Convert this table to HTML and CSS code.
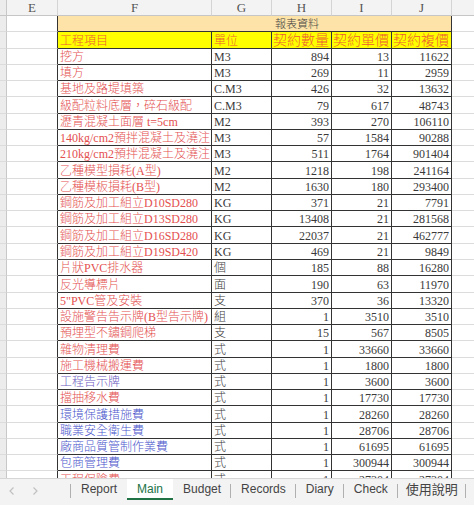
FILE: index.html
```html
<!DOCTYPE html>
<html>
<head>
<meta charset="utf-8">
<link rel="stylesheet" href="styles.css">
</head>
<body>
<div class="app">
  <div class="gridwrap">
    <table class="grid">
      <colgroup>
        <col class="c-rh"><col class="c-e"><col class="c-f"><col class="c-g"><col class="c-h"><col class="c-i"><col class="c-j"><col class="c-k">
      </colgroup>
      <thead>
        <tr class="colhdr">
          <th class="rh"></th><th>E</th><th>F</th><th>G</th><th>H</th><th>I</th><th>J</th><th class="kh"></th>
        </tr>
      </thead>
      <tbody>
        <tr>
          <td class="rh"></td><td class="e"></td>
          <td class="title" colspan="5"><span class="title-text">報表資料</span></td>
          <td class="k"></td>
        </tr>
        <tr class="head">
          <td class="rh"></td><td class="e"></td>
          <td class="d name hd">工程項目</td><td class="d unit hd">單位</td><td class="d hd big">契約數量</td><td class="d hd big">契約單價</td><td class="d hd big">契約複價</td>
          <td class="k"></td>
        </tr>
        <tr><td class="rh"></td><td class="e"></td><td class="d name red">挖方</td><td class="d unit">M3</td><td class="d num">894</td><td class="d num">13</td><td class="d num">11622</td><td class="k"></td></tr>
        <tr><td class="rh"></td><td class="e"></td><td class="d name red">填方</td><td class="d unit">M3</td><td class="d num">269</td><td class="d num">11</td><td class="d num">2959</td><td class="k"></td></tr>
        <tr><td class="rh"></td><td class="e"></td><td class="d name red">基地及路堤填築</td><td class="d unit">C.M3</td><td class="d num">426</td><td class="d num">32</td><td class="d num">13632</td><td class="k"></td></tr>
        <tr><td class="rh"></td><td class="e"></td><td class="d name red">級配粒料底層，碎石級配</td><td class="d unit">C.M3</td><td class="d num">79</td><td class="d num">617</td><td class="d num">48743</td><td class="k"></td></tr>
        <tr><td class="rh"></td><td class="e"></td><td class="d name red">瀝青混凝土面層 t=5cm</td><td class="d unit">M2</td><td class="d num">393</td><td class="d num">270</td><td class="d num">106110</td><td class="k"></td></tr>
        <tr><td class="rh"></td><td class="e"></td><td class="d name red">140kg/cm2預拌混凝土及澆注</td><td class="d unit">M3</td><td class="d num">57</td><td class="d num">1584</td><td class="d num">90288</td><td class="k"></td></tr>
        <tr><td class="rh"></td><td class="e"></td><td class="d name red">210kg/cm2預拌混凝土及澆注</td><td class="d unit">M3</td><td class="d num">511</td><td class="d num">1764</td><td class="d num">901404</td><td class="k"></td></tr>
        <tr><td class="rh"></td><td class="e"></td><td class="d name red">乙種模型損耗(A型)</td><td class="d unit">M2</td><td class="d num">1218</td><td class="d num">198</td><td class="d num">241164</td><td class="k"></td></tr>
        <tr><td class="rh"></td><td class="e"></td><td class="d name red">乙種模板損耗(B型)</td><td class="d unit">M2</td><td class="d num">1630</td><td class="d num">180</td><td class="d num">293400</td><td class="k"></td></tr>
        <tr><td class="rh"></td><td class="e"></td><td class="d name red">鋼筋及加工組立D10SD280</td><td class="d unit">KG</td><td class="d num">371</td><td class="d num">21</td><td class="d num">7791</td><td class="k"></td></tr>
        <tr><td class="rh"></td><td class="e"></td><td class="d name red">鋼筋及加工組立D13SD280</td><td class="d unit">KG</td><td class="d num">13408</td><td class="d num">21</td><td class="d num">281568</td><td class="k"></td></tr>
        <tr><td class="rh"></td><td class="e"></td><td class="d name red">鋼筋及加工組立D16SD280</td><td class="d unit">KG</td><td class="d num">22037</td><td class="d num">21</td><td class="d num">462777</td><td class="k"></td></tr>
        <tr><td class="rh"></td><td class="e"></td><td class="d name red">鋼筋及加工組立D19SD420</td><td class="d unit">KG</td><td class="d num">469</td><td class="d num">21</td><td class="d num">9849</td><td class="k"></td></tr>
        <tr><td class="rh"></td><td class="e"></td><td class="d name red">片狀PVC排水器</td><td class="d unit">個</td><td class="d num">185</td><td class="d num">88</td><td class="d num">16280</td><td class="k"></td></tr>
        <tr><td class="rh"></td><td class="e"></td><td class="d name red">反光導標片</td><td class="d unit">面</td><td class="d num">190</td><td class="d num">63</td><td class="d num">11970</td><td class="k"></td></tr>
        <tr><td class="rh"></td><td class="e"></td><td class="d name red">5"PVC管及安裝</td><td class="d unit">支</td><td class="d num">370</td><td class="d num">36</td><td class="d num">13320</td><td class="k"></td></tr>
        <tr><td class="rh"></td><td class="e"></td><td class="d name red">設施警告告示牌(B型告示牌)</td><td class="d unit">組</td><td class="d num">1</td><td class="d num">3510</td><td class="d num">3510</td><td class="k"></td></tr>
        <tr><td class="rh"></td><td class="e"></td><td class="d name red">預埋型不鏽鋼爬梯</td><td class="d unit">支</td><td class="d num">15</td><td class="d num">567</td><td class="d num">8505</td><td class="k"></td></tr>
        <tr><td class="rh"></td><td class="e"></td><td class="d name red">雜物清理費</td><td class="d unit">式</td><td class="d num">1</td><td class="d num">33660</td><td class="d num">33660</td><td class="k"></td></tr>
        <tr><td class="rh"></td><td class="e"></td><td class="d name red">施工機械搬運費</td><td class="d unit">式</td><td class="d num">1</td><td class="d num">1800</td><td class="d num">1800</td><td class="k"></td></tr>
        <tr><td class="rh"></td><td class="e"></td><td class="d name purple">工程告示牌</td><td class="d unit">式</td><td class="d num">1</td><td class="d num">3600</td><td class="d num">3600</td><td class="k"></td></tr>
        <tr><td class="rh"></td><td class="e"></td><td class="d name red">擋抽移水費</td><td class="d unit">式</td><td class="d num">1</td><td class="d num">17730</td><td class="d num">17730</td><td class="k"></td></tr>
        <tr><td class="rh"></td><td class="e"></td><td class="d name blue">環境保護措施費</td><td class="d unit">式</td><td class="d num">1</td><td class="d num">28260</td><td class="d num">28260</td><td class="k"></td></tr>
        <tr><td class="rh"></td><td class="e"></td><td class="d name blue">職業安全衛生費</td><td class="d unit">式</td><td class="d num">1</td><td class="d num">28706</td><td class="d num">28706</td><td class="k"></td></tr>
        <tr><td class="rh"></td><td class="e"></td><td class="d name blue">廠商品質管制作業費</td><td class="d unit">式</td><td class="d num">1</td><td class="d num">61695</td><td class="d num">61695</td><td class="k"></td></tr>
        <tr><td class="rh"></td><td class="e"></td><td class="d name blue">包商管理費</td><td class="d unit">式</td><td class="d num">1</td><td class="d num">300944</td><td class="d num">300944</td><td class="k"></td></tr>
        <tr class="cut"><td class="rh"></td><td class="e"></td><td class="d name red">工程保險費</td><td class="d unit">式</td><td class="d num">1</td><td class="d num">27304</td><td class="d num">27304</td><td class="k"></td></tr>
      </tbody>
    </table>
  </div>
  <div class="tabbar">
    <div class="nav">
      <svg class="arrow" width="5" height="8" viewBox="0 0 5 8"><path d="M4.5 0.5 L1 4 L4.5 7.5" fill="none" stroke="#c0c0c0" stroke-width="1.2"/></svg>
      <svg class="arrow" width="5" height="8" viewBox="0 0 5 8"><path d="M0.5 0.5 L4 4 L0.5 7.5" fill="none" stroke="#c0c0c0" stroke-width="1.2"/></svg>
    </div>
    <div class="tabs">
      <div class="tab">Report</div>
      <div class="tab active">Main</div>
      <div class="tab">Budget</div>
      <div class="tab">Records</div>
      <div class="tab">Diary</div>
      <div class="tab">Check</div>
      <div class="tab cjk">使用說明</div>
    </div>
  </div>
</div>
</body>
</html>
```

FILE: styles.css
```css
html, body {
  margin: 0;
  padding: 0;
  background: #ffffff;
}
.app {
  width: 474px;
  height: 505px;
  display: flex;
  flex-direction: column;
  overflow: hidden;
}
.gridwrap {
  height: 478px;
  overflow: hidden;
  flex: none;
}
.grid {
  border-collapse: separate;
  border-spacing: 0;
  table-layout: fixed;
  width: 500px;
  font-family: "Liberation Serif", "Noto Sans CJK TC", serif;
  font-size: 12px;
  font-weight: 300;
  color: #3a3a3a;
}
.c-rh { width: 7px; }
.c-e { width: 51px; }
.c-f { width: 154px; }
.c-g { width: 60px; }
.c-h { width: 60px; }
.c-i { width: 60px; }
.c-j { width: 60px; }
.c-k { width: 48px; }

.grid td, .grid th {
  padding: 0 2px 0 2px;
  border-right: 1px solid #dcdcdc;
  border-bottom: 1px solid #dcdcdc;
  white-space: nowrap;
  overflow: hidden;
  vertical-align: bottom;
  line-height: 14px;
}
.grid tbody tr {
  height: 16.28px;
}
.colhdr {
  height: 16px;
}
.colhdr th {
  background: #f3f3f3;
  border-right: 1px solid #d4d4d4;
  border-bottom: 1px solid #c6c6c6;
  font-weight: normal;
  color: #555;
  font-size: 13px;
  vertical-align: middle;
  text-align: center;
  line-height: 15px;
}
.grid .rh {
  background: #ececec;
  border-right: 1px solid #c8c8c8;
  padding: 0;
}
.grid td.e {
  border-right: 1px solid #333;
}
.grid td.title {
  background: #fde3a7;
  border-right: 1px solid #333;
  border-bottom: 1px solid #333;
  color: #444;
  padding-left: 0;
  font-size: 11px;
}
.title-text {
  padding-left: 217px;
}
.grid td.d {
  border-right: 1px solid #333;
  border-bottom: 1px solid #333;
}
.grid td.hd {
  background: #ffff00;
  color: #ec5a34;
}
.grid td.big {
  font-size: 14px;
  padding-left: 1px;
}
.num {
  text-align: right;
}
.red { color: #e45050; }
.blue { color: #4a56cc; }
.purple { color: #6a5cc0; }

.tabbar {
  flex: 1;
  background: #f3f3f3;
  border-top: 1px solid #d6d6d6;
  display: flex;
  align-items: flex-start;
  font-family: "Liberation Sans", "Noto Sans CJK TC", sans-serif;
  font-size: 12px;
  color: #444;
}
.nav {
  width: 71px;
  display: flex;
  align-items: center;
  gap: 19px;
  padding-left: 9px;
  box-sizing: border-box;
  border-right: 1px solid #b0b0b0;
  margin-top: 5px;
  height: 14px;
}
.tabs {
  display: flex;
}
.tab {
  padding: 0 10px;
  height: 21px;
  line-height: 21px;
  box-sizing: border-box;
  position: relative;
}
.tab.cjk {
  font-size: 13px;
  padding: 0 8px 0 8px;
}
.tab::after {
  content: "";
  position: absolute;
  right: 0;
  top: 5px;
  height: 14px;
  border-right: 1px solid #b0b0b0;
}
.tab.active {
  background: #ffffff;
  color: #217346;
  border-bottom: 2px solid #217346;
}
.tab.active::after,
.tab:first-child::after {
  display: none;
}
```
